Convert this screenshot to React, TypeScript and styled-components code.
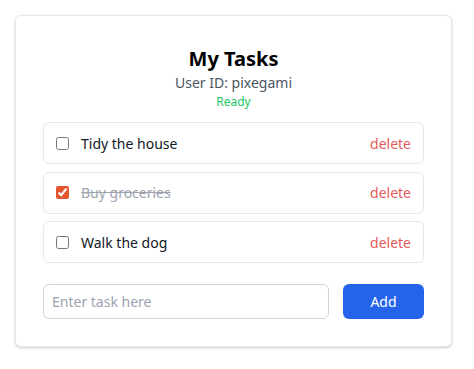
import styled, { createGlobalStyle } from "styled-components";

const GlobalStyle = createGlobalStyle`
  body {
    margin: 0;
    background: #ffffff;
    font-family: "Noto Sans", "Open Sans", sans-serif;
  }
  * { box-sizing: border-box; }
`;

interface Task {
  id: number;
  name: string;
  done: boolean;
}

const TASKS: Task[] = [
  { id: 1, name: "Tidy the house", done: false },
  { id: 2, name: "Buy groceries", done: true },
  { id: 3, name: "Walk the dog", done: false },
];

export default function App() {
  return (
    <>
      <GlobalStyle />
      <Card>
        <Header>
          <Title>My Tasks</Title>
          <UserId>User ID: pixegami</UserId>
          <Status>Ready</Status>
        </Header>
        <TaskList>
          {TASKS.map((task) => (
            <TaskRow key={task.id}>
              <Check type="checkbox" defaultChecked={task.done} />
              <TaskName $done={task.done}>{task.name}</TaskName>
              <DeleteButton>delete</DeleteButton>
            </TaskRow>
          ))}
        </TaskList>
        <AddForm>
          <TaskInput placeholder="Enter task here" />
          <AddButton>Add</AddButton>
        </AddForm>
      </Card>
    </>
  );
}

const Card = styled.div`
  width: 437px;
  margin: 15px;
  padding: 27px;
  border: 1px solid #e5e7eb;
  border-radius: 6px;
  background: #ffffff;
  box-shadow: 0 1px 3px rgba(0, 0, 0, 0.12), 0 1px 2px rgba(0, 0, 0, 0.08);
`;

const Header = styled.div`
  display: flex;
  flex-direction: column;
  align-items: center;
  margin: 2px 0 11px;
`;

const Title = styled.h2`
  margin: 0;
  font-size: 20px;
  line-height: 28px;
  font-weight: 700;
  color: #000000;
`;

const UserId = styled.div`
  font-size: 14px;
  line-height: 20px;
  color: #4b5563;
`;

const Status = styled.div`
  font-size: 12px;
  line-height: 18px;
  color: #22c55e;
`;

const TaskList = styled.div`
  display: flex;
  flex-direction: column;
  gap: 7.5px;
`;

const TaskRow = styled.div`
  display: flex;
  align-items: center;
  height: 42px;
  padding: 0 12px;
  border: 1px solid #e5e7eb;
  border-radius: 6px;
`;

const Check = styled.input`
  width: 13px;
  height: 13px;
  margin: 0 12px 0 0;
  accent-color: #e4572e;
`;

const TaskName = styled.span<{ $done: boolean }>`
  flex: 1;
  font-size: 14px;
  color: ${({ $done }) => ($done ? "#9ca3af" : "#111827")};
  text-decoration: ${({ $done }) => ($done ? "line-through" : "none")};
`;

const DeleteButton = styled.button`
  border: none;
  background: none;
  padding: 0;
  font-family: inherit;
  font-size: 14px;
  color: #e45b5b;
  cursor: pointer;
`;

const AddForm = styled.div`
  display: flex;
  gap: 14px;
  margin-top: 21px;
`;

const TaskInput = styled.input`
  flex: 1;
  height: 35px;
  padding: 0 8px;
  border: 1px solid #d1d5db;
  border-radius: 6px;
  font-family: inherit;
  font-size: 14px;
  &::placeholder {
    color: #9ca3af;
  }
  &:focus {
    outline: none;
  }
`;

const AddButton = styled.button`
  width: 81px;
  height: 35px;
  border: none;
  border-radius: 6px;
  background: #2563eb;
  color: #ffffff;
  font-family: inherit;
  font-size: 14px;
  cursor: pointer;
`;
